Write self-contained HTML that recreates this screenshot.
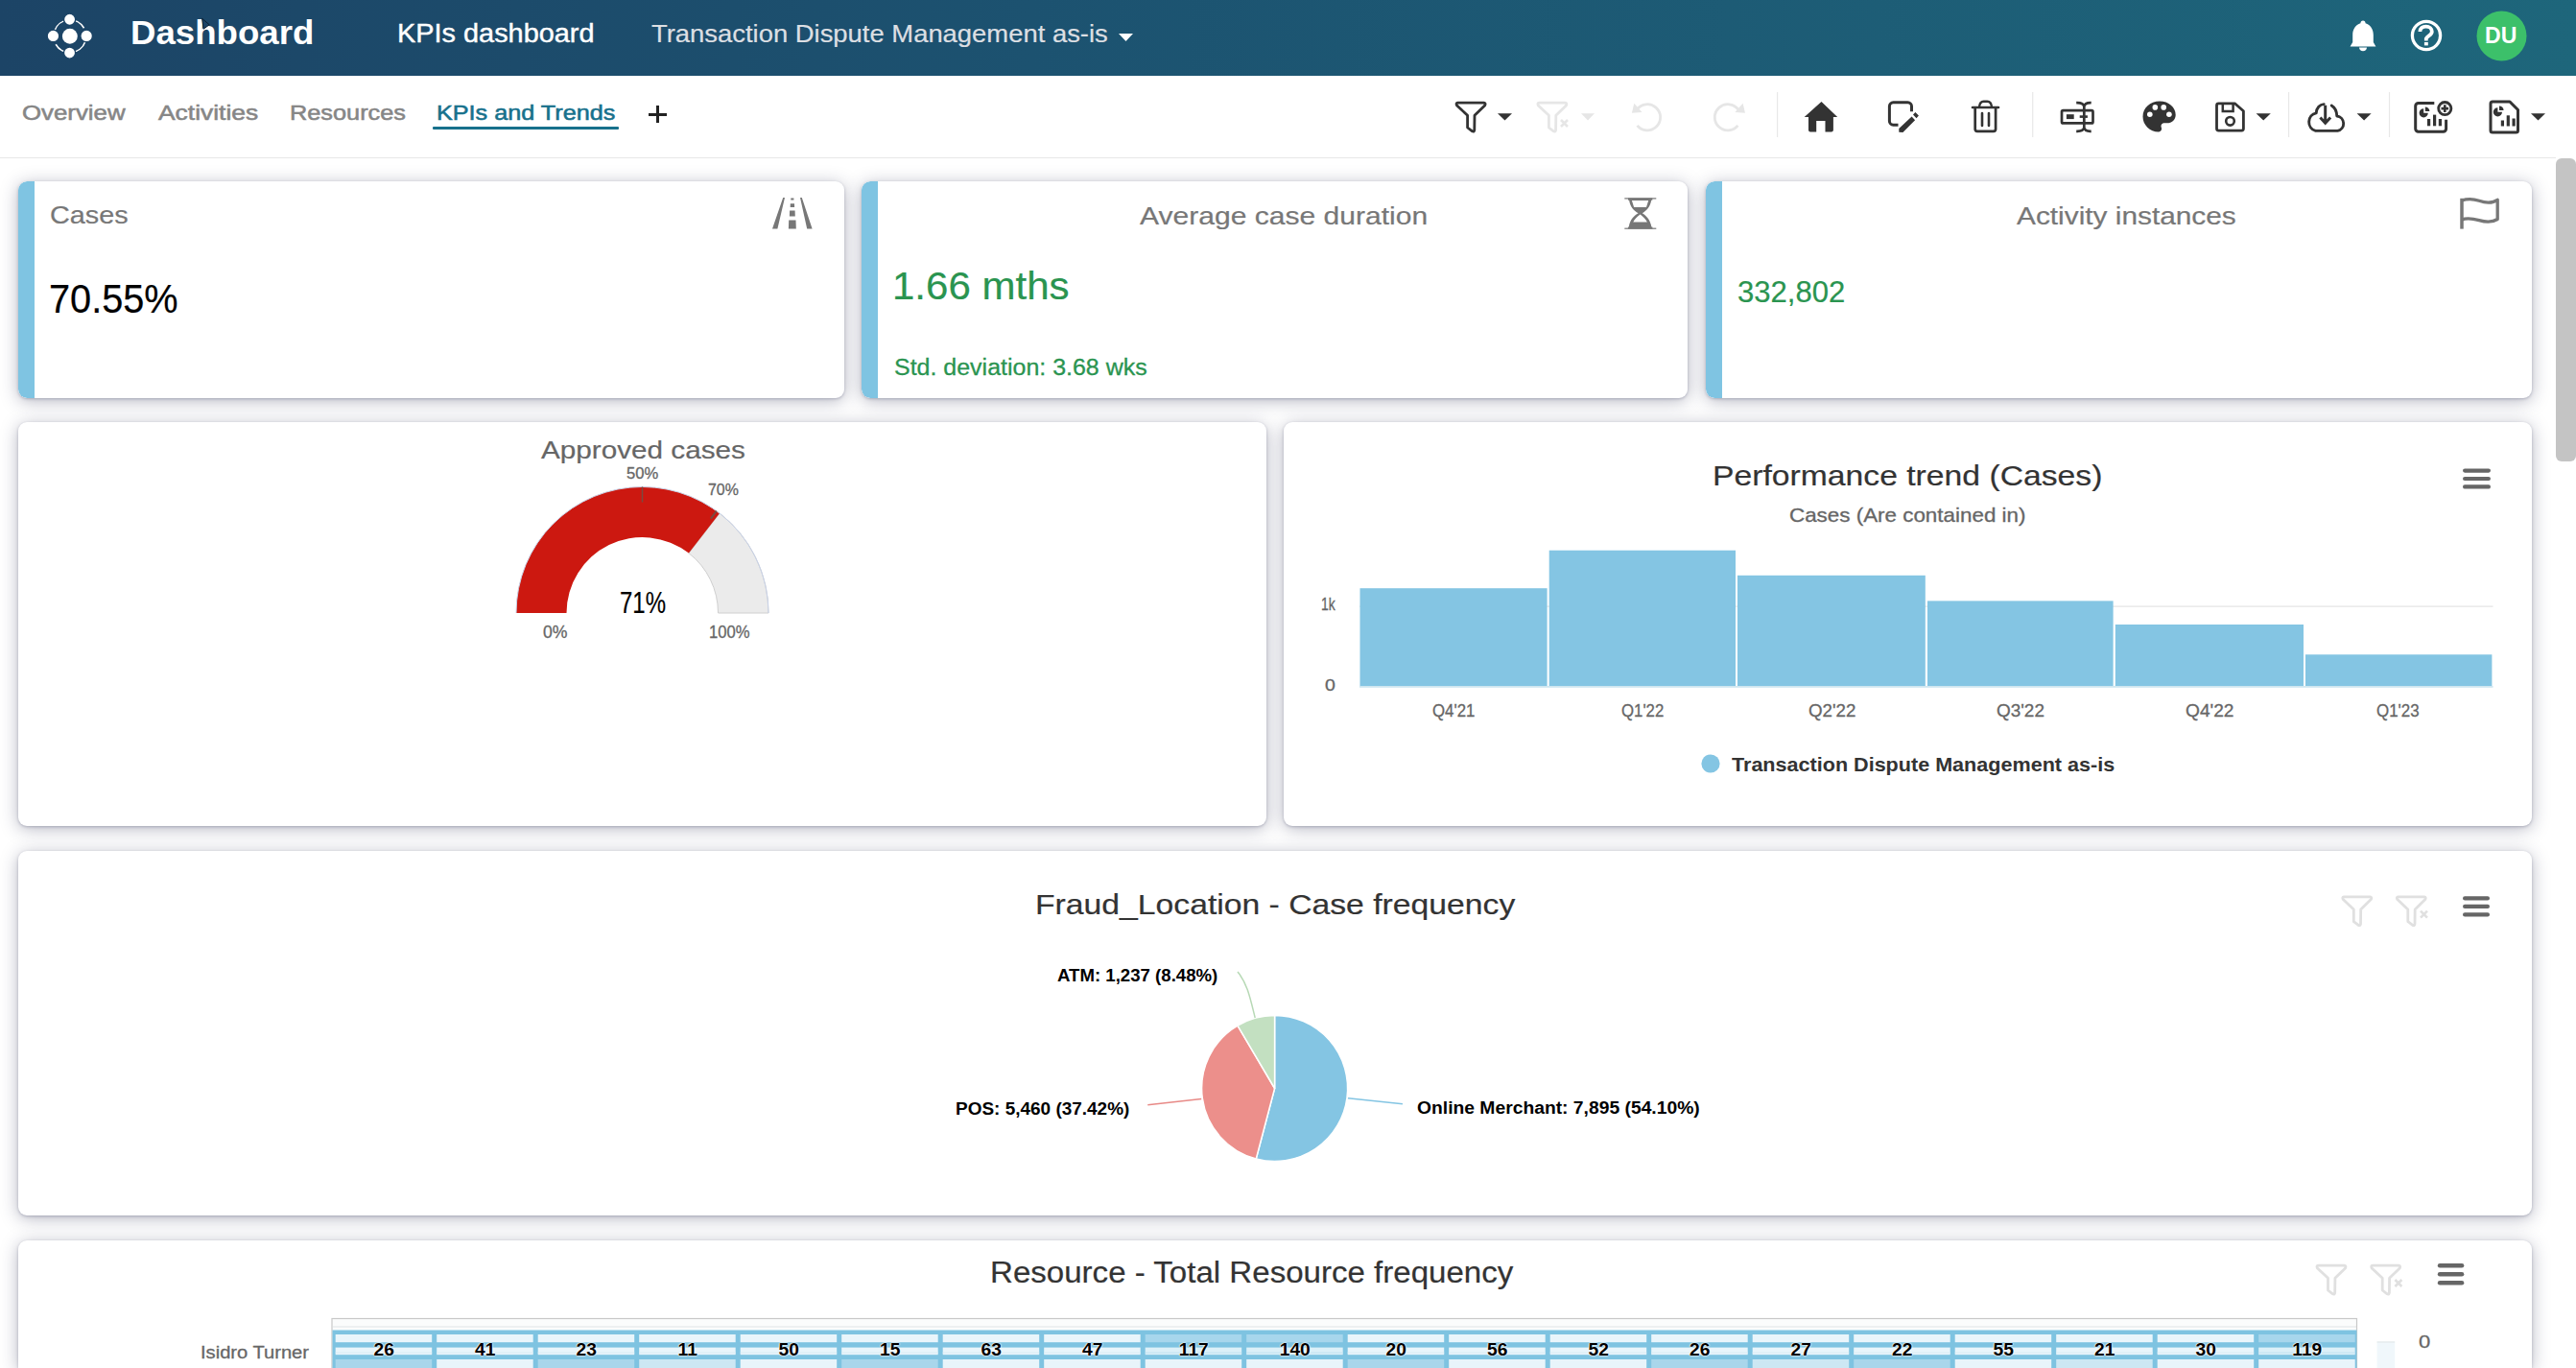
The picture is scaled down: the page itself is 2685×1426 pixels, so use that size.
<!DOCTYPE html><html><head><meta charset="utf-8"><style>
*{margin:0;padding:0;box-sizing:border-box}
html,body{width:2685px;height:1426px;overflow:hidden;background:#fff;font-family:"Liberation Sans",sans-serif}
.t{position:absolute;line-height:1;white-space:nowrap;transform-origin:0 0}
.a{position:absolute}
.card{position:absolute;background:#fff;border-radius:9px;box-shadow:0 1px 3px rgba(40,45,80,0.25),0 3px 18px rgba(40,45,80,0.34)}
.strip{position:absolute;left:0;top:0;bottom:0;width:17px;background:#7fc4e2;border-radius:9px 0 0 9px}
svg{position:absolute;overflow:visible}
</style></head><body>
<div class="a" style="left:0;top:0;width:2685px;height:79px;background:linear-gradient(90deg,#1c4466 0%,#1c5270 40%,#1e667b 100%)"></div>
<svg style="left:0;top:0" width="2685" height="80" viewBox="0 0 2685 80">
<path d="M56.88 31.94 A17 17 0 0 1 87.57 29.25 M88.82 43.56 A17 17 0 0 1 58.13 46.25" fill="none" stroke="#fff" stroke-width="1.6"/>
<circle cx="72.85" cy="37.75" r="7.95" fill="#fff"/>
<g fill="#fff" stroke="#1c4466" stroke-width="1.4">
<circle cx="72.6" cy="20.25" r="6.1"/><circle cx="72.55" cy="55.05" r="6.1"/>
<circle cx="55.45" cy="37.45" r="6.3"/><circle cx="90.15" cy="37.45" r="6.3"/></g>
<path d="M1166 35 L1181 35 L1173.5 43 Z" fill="#fff"/>
<!-- bell -->
<g fill="#fff">
<path d="M2463 21.5 c1.6 0 2.6 1.2 2.6 2.8 c5.2 1.6 8.2 6.4 8.2 12.2 v7.5 l2.6 4.6 h-26.8 l2.6-4.6 v-7.5 c0-5.8 3-10.6 8.2-12.2 c0-1.6 1-2.8 2.6-2.8z"/>
<path d="M2459 49.5 h8 c0 2.2-1.8 3.8-4 3.8 s-4-1.6-4-3.8z"/>
</g>
<!-- help -->
<circle cx="2529" cy="37" r="14.6" fill="none" stroke="#fff" stroke-width="3.3"/>
<path d="M2522.4 33 C2522.4 29.6 2525 27.7 2528.6 27.7 C2532.3 27.7 2534.8 29.8 2534.8 33 C2534.8 36.3 2530.6 37.3 2528.8 40.2 V42.4" fill="none" stroke="#fff" stroke-width="3.8"/>
<rect x="2526.9" y="44" width="3.9" height="3.4" fill="#fff"/>
<!-- avatar -->
<circle cx="2607.5" cy="37.4" r="26" fill="#3cc06a"/>
</svg>
<div class="a" style="left:0;top:164px;width:2664px;height:1px;background:#e8e8e8"></div>
<div class="a" style="left:451px;top:132px;width:194px;height:3px;background:#17718c;border-radius:1px"></div>
<div class="a" style="left:675.6px;top:117.6px;width:19.4px;height:3px;background:#222"></div>
<div class="a" style="left:683.8px;top:109.7px;width:3px;height:18.7px;background:#222"></div>
<svg style="left:0;top:0" width="2685" height="170" viewBox="0 0 2685 170"><path d="M1519.5 107.2 L1546.5 107.2 Q1549 107.5 1547.6 110 L1537 120.3 L1536.8 135.5 Q1536.5 137.8 1534.6 136.8 L1529.6 133 L1529.6 120.3 L1518.6 110 Q1517.2 107.5 1519.5 107.2 Z" fill="none" stroke="#333" stroke-width="2.8" stroke-linejoin="round"/><path d="M1561 118.2 L1576 118.2 L1568.5 125.6 Z" fill="#333"/><path d="M1604.3 107.2 L1631.3 107.2 Q1633.8 107.5 1632.4 110 L1621.8 120.3 L1621.6 135.5 Q1621.3 137.8 1619.4 136.8 L1614.4 133 L1614.4 120.3 L1603.4 110 Q1602 107.5 1604.3 107.2 Z" fill="none" stroke="#e6e6e6" stroke-width="2.8" stroke-linejoin="round"/><path d="M1627 125 l7 7 m0-7 l-7 7" stroke="#e6e6e6" stroke-width="2.6"/><path d="M1648 118.2 L1662 118.2 L1655.0 125.6 Z" fill="#e6e6e6"/><path d="M1706.14 114.12 A13.6 13.6 0 1 1 1706.49 130.93" fill="none" stroke="#e6e6e6" stroke-width="2.8"/><path d="M1703.3 107.8 L1700.9 117.8 L1711.5 117 Z" fill="#e6e6e6"/><path d="M1811.76 114.12 A13.6 13.6 0 1 0 1811.41 130.93" fill="none" stroke="#e6e6e6" stroke-width="2.8"/><path d="M1816.6 107.8 L1819 117.8 L1808.4 117 Z" fill="#e6e6e6"/><rect x="1852.0" y="96" width="1.2" height="47" fill="#e8e8e8"/><rect x="2118.1" y="96" width="1.2" height="47" fill="#e8e8e8"/><rect x="2385.0" y="96" width="1.2" height="47" fill="#e8e8e8"/><rect x="2489.9" y="96" width="1.2" height="47" fill="#e8e8e8"/><path d="M1898.5 106 L1915.2 122 h-4.3 v13.6 a2 2 0 0 1 -2 2 h-6.4 v-11.6 h-9.3 v11.6 h-6.2 a2 2 0 0 1 -2-2 v-13.6 h-4.3 z" fill="#333"/><path d="M1992.5 116.2 V110.8 a4 4 0 0 0 -4-4 H1973.4 a4 4 0 0 0 -4 4 V126.2 a4 4 0 0 0 4 4 H1978.5" fill="none" stroke="#333" stroke-width="3"/><path d="M1979.3 137.7 L1979.3 134.1 L1992.6 121.4 L1996.1 125.2 L1983.4 138 Z M1994 119.5 L1996.4 117 L1999.9 120.6 L1997.5 123.3 Z" fill="#333"/><path d="M2056 112 H2083" stroke="#333" stroke-width="2.6" stroke-linecap="round"/><path d="M2063 111.5 C2063.5 107 2065 105.8 2067.5 105.8 H2071.5 C2074 105.8 2075.5 107 2076 111.5" fill="none" stroke="#333" stroke-width="2.4"/><path d="M2058.7 113 V134.5 a2.3 2.3 0 0 0 2.3 2.3 H2077.8 a2.3 2.3 0 0 0 2.3-2.3 V113" fill="none" stroke="#333" stroke-width="2.7"/><path d="M2066 118 V131 M2073 118 V131" stroke="#333" stroke-width="2.6" stroke-linecap="round"/><rect x="2149" y="115.2" width="32.5" height="13.2" rx="1.5" fill="none" stroke="#333" stroke-width="2.7"/><rect x="2153.9" y="119.2" width="7.8" height="4.9" fill="#333"/><path d="M2167.7 121.6 H2175.9" stroke="#333" stroke-width="2.6"/><path d="M2172.3 110 V133.8 M2164.2 107.2 C2168 107 2171.5 107.5 2172.3 111 C2173 107.5 2176.5 107 2179.7 107.2 M2164.2 136.8 C2168 137 2171.5 136.5 2172.3 133 C2173 136.5 2176.5 137 2179.7 136.8" fill="none" stroke="#333" stroke-width="2.7"/><path d="M2251 105.5 c9.5 0 16.7 6.3 16.7 14.2 c0 5-4 8.6-9 8.6 h-3 c-2 0-3.2 1.6-3.2 3.2 c0 0.9 0.6 1.6 0.6 2.6 c0 1.6-1 3.3-3 3.3 c-9.5 0-16.6-7.4-16.6-16 c0-8.8 7.5-15.9 17.5-15.9z" fill="#333"/><circle cx="2240.8" cy="119.2" r="2.8" fill="#fff"/><circle cx="2246.3" cy="111.9" r="2.8" fill="#fff"/><circle cx="2255.2" cy="111.9" r="2.8" fill="#fff"/><circle cx="2260.9" cy="119.2" r="2.8" fill="#fff"/><path d="M2310.5 109.8 a2 2 0 0 1 2-2 h16.8 l9.1 7.9 v18.4 a2 2 0 0 1 -2 2 h-23.9 a2 2 0 0 1 -2-2z" fill="none" stroke="#333" stroke-width="2.8" stroke-linejoin="round"/><path d="M2316.8 108 v7.9 h10.8 v-7.9" fill="none" stroke="#333" stroke-width="2.5"/><circle cx="2324.5" cy="126.3" r="4.3" fill="none" stroke="#333" stroke-width="2.6"/><path d="M2351.6 118.2 L2366.8 118.2 L2359.2 125.6 Z" fill="#333"/><path d="M2414.2 117.8 A9.6 9.6 0 0 0 2413.6 136.4 H2436.4 A7.8 7.8 0 0 0 2435.8 121 M2414.2 117.8 C2414.6 112.5 2418 108.8 2422.2 108.6 M2430.2 110 C2433.5 112 2435.6 116 2435.8 121" fill="none" stroke="#333" stroke-width="2.9" stroke-linecap="round"/><path d="M2423.7 109.8 V128 M2418.4 122.5 L2423.7 128.2 L2429.1 122.5" fill="none" stroke="#333" stroke-width="3"/><path d="M2456.6 118.2 L2471.6 118.2 L2464.1 125.6 Z" fill="#333"/><path d="M2537.3 107.5 h-16.6 a3 3 0 0 0 -3 3 v23.8 a3 3 0 0 0 3 3 h25.9 a3 3 0 0 0 3-3 v-9.6" fill="none" stroke="#333" stroke-width="3"/><circle cx="2548.3" cy="113.1" r="6.6" fill="none" stroke="#333" stroke-width="2.8"/><path d="M2548.3 109.3 v7.6 M2544.5 113.1 h7.6" stroke="#333" stroke-width="2.6"/><path d="M2526.2 113.2 a4.6 4.6 0 1 0 4.6 4.6 h-4.6z" fill="#333"/><path d="M2527.8 111.5 a4.6 4.6 0 0 1 4.6 4.6 h-4.6z" fill="#333"/><rect x="2530" y="124" width="3.2" height="7.3" fill="#333"/><rect x="2536" y="119.6" width="3.2" height="11.7" fill="#333"/><rect x="2541.8" y="124" width="3.2" height="7.3" fill="#333"/><path d="M2596 108 a2 2 0 0 1 2-2 h18 l8.5 8.5 v21.5 a2 2 0 0 1 -2 2 h-24.5 a2 2 0 0 1 -2-2z" fill="none" stroke="#333" stroke-width="3" stroke-linejoin="round"/><path d="M2603.4 112.2 a4.6 4.6 0 1 0 4.6 4.6 h-4.6z" fill="#333"/><path d="M2605 110.5 a4.6 4.6 0 0 1 4.6 4.6 h-4.6z" fill="#333"/><rect x="2606.8" y="125.5" width="3.2" height="6" fill="#333"/><rect x="2612.7" y="120.3" width="3.2" height="11.2" fill="#333"/><rect x="2618.5" y="123.5" width="3.2" height="8" fill="#333"/><path d="M2638 118.2 L2653 118.2 L2645.5 125.6 Z" fill="#333"/></svg>
<div class="a" style="left:2664px;top:165px;width:21px;height:316px;background:#c4c4c4;border-radius:6px"></div>
<div class="card" style="left:19px;top:189px;width:861px;height:226px;overflow:hidden"><div class="strip"></div></div>
<div class="card" style="left:898px;top:189px;width:861px;height:226px;overflow:hidden"><div class="strip"></div></div>
<div class="card" style="left:1778px;top:189px;width:861px;height:226px;overflow:hidden"><div class="strip"></div></div>
<div class="card" style="left:19px;top:440px;width:1301px;height:421px;overflow:hidden"></div>
<div class="card" style="left:1338px;top:440px;width:1301px;height:421px;overflow:hidden"></div>
<div class="card" style="left:19px;top:887px;width:2620px;height:380px;overflow:hidden"></div>
<div class="card" style="left:19px;top:1293px;width:2620px;height:133px;border-radius:9px 9px 0 0"></div>
<svg style="left:0;top:0" width="2685" height="1426" viewBox="0 0 2685 1426"><path d="M816.2 206 h1.8 l-7.6 32.6 h-5.4z M834 206 h1.8 l10.8 32.6 h-5.4z" fill="#777"/><path d="M824.3 206.4 h3.1 v2.2 h-3.1z M823.8 212.3 h4.2 l0.1 3.6 h-4.4z M823.1 219.5 h5.5 l0.2 6 h-5.9z M822.2 229.6 h7.3 l0.3 9 h-7.9z" fill="#777"/><rect x="1693.3" y="206.3" width="33" height="1.2" fill="#777"/><rect x="1693.3" y="237.6" width="33" height="1.2" fill="#777"/><path fill-rule="evenodd" fill="#777" d="M1697 206.5 h25.3 v2.3 h-1.1 C1720 216 1716 219.5 1711.8 222.3 C1716 225 1720 229 1721.4 236.4 h1 v2.2 h-25.5 v-2.2 h0.9 C1699 229 1703 225 1707.6 222.3 C1703 219.5 1699.2 216 1698.1 208.8 h-1.1z M1700.9 208.9 h17.3 l-2.2 7 h-12.9z M1709.6 223.6 C1706 226 1703.5 229 1702.3 231.4 h14.6 C1715.6 229 1713 226 1709.6 223.6z"/><path d="M2566 238.6 V206.8" stroke="#777" stroke-width="3.5"/><path d="M2566 209 C2571 207.3 2578 207.3 2584 209.3 S2598 212 2603.2 208.3 V228.5 C2598 231.8 2590 231.3 2584 229.6 S2571 227 2566 228.9" fill="none" stroke="#777" stroke-width="3.3" stroke-linejoin="round"/><rect x="2567" y="488.50" width="29" height="4.20" rx="2.10" fill="#666"/><rect x="2567" y="496.90" width="29" height="4.20" rx="2.10" fill="#666"/><rect x="2567" y="505.30" width="29" height="4.20" rx="2.10" fill="#666"/><rect x="2567" y="934.30" width="28" height="4.26" rx="2.13" fill="#666"/><rect x="2567" y="942.82" width="28" height="4.26" rx="2.13" fill="#666"/><rect x="2567" y="951.34" width="28" height="4.26" rx="2.13" fill="#666"/><rect x="2540.8" y="1317.00" width="27.5" height="4.52" rx="2.26" fill="#666"/><rect x="2540.8" y="1326.04" width="27.5" height="4.52" rx="2.26" fill="#666"/><rect x="2540.8" y="1335.08" width="27.5" height="4.52" rx="2.26" fill="#666"/><g transform="translate(2440.5,932.6) scale(1.0)"><path d="M2.7 2.2 L29.7 2.2 Q32.2 2.5 30.8 5 L20.2 15.3 L20 30.5 Q19.7 32.8 17.8 31.8 L12.8 28 L12.8 15.3 L1.8 5 Q0.4 2.5 2.7 2.2 Z" fill="none" stroke="#e0e0e0" stroke-width="2.8" stroke-linejoin="round"/></g><g transform="translate(2497,932.6) scale(1.0)"><path d="M2.7 2.2 L29.7 2.2 Q32.2 2.5 30.8 5 L20.2 15.3 L20 30.5 Q19.7 32.8 17.8 31.8 L12.8 28 L12.8 15.3 L1.8 5 Q0.4 2.5 2.7 2.2 Z" fill="none" stroke="#e0e0e0" stroke-width="2.8" stroke-linejoin="round"/><path d="M26 17 l7 7 m0-7 l-7 7" stroke="#e0e0e0" stroke-width="2.6"/></g><g transform="translate(2413.7,1317) scale(1.0)"><path d="M2.7 2.2 L29.7 2.2 Q32.2 2.5 30.8 5 L20.2 15.3 L20 30.5 Q19.7 32.8 17.8 31.8 L12.8 28 L12.8 15.3 L1.8 5 Q0.4 2.5 2.7 2.2 Z" fill="none" stroke="#e0e0e0" stroke-width="2.8" stroke-linejoin="round"/></g><g transform="translate(2470.4,1317) scale(1.0)"><path d="M2.7 2.2 L29.7 2.2 Q32.2 2.5 30.8 5 L20.2 15.3 L20 30.5 Q19.7 32.8 17.8 31.8 L12.8 28 L12.8 15.3 L1.8 5 Q0.4 2.5 2.7 2.2 Z" fill="none" stroke="#e0e0e0" stroke-width="2.8" stroke-linejoin="round"/><path d="M26 17 l7 7 m0-7 l-7 7" stroke="#e0e0e0" stroke-width="2.6"/></g></svg>
<svg style="left:0;top:0" width="2685" height="1426" viewBox="0 0 2685 1426"><path d="M750.10 535.09 A131.5 131.5 0 0 1 801.00 639.00 L748.50 639.00 A79 79 0 0 0 717.92 576.58z" fill="#ebebeb" stroke="#cfcfcf" stroke-width="1"/><path d="M538.00 639.00 A131.5 131.5 0 0 1 750.10 535.09 L717.92 576.58 A79 79 0 0 0 590.50 639.00z" fill="#cc1810"/><path d="M538.00 639.00 A131.5 131.5 0 0 1 801.00 639.00" fill="none" stroke="#c9d3e8" stroke-width="1"/><path d="M669.50 507.50 L669.50 523.50" stroke="#7a4a40" stroke-width="1.5"/><path d="M746.79 532.61 L740.92 540.70" stroke="#7a4a40" stroke-width="2"/></svg>
<svg style="left:0;top:0" width="2685" height="1426" viewBox="0 0 2685 1426"><rect x="1417" y="631.5" width="1181.5" height="1.3" fill="#e6e6e6"/><rect x="1417.5" y="613.2" width="195.10" height="101.80" fill="#84c5e3"/><rect x="1614.7" y="573.7" width="194.30" height="141.30" fill="#84c5e3"/><rect x="1811" y="599.8" width="195.80" height="115.20" fill="#84c5e3"/><rect x="2009" y="626.4" width="193.60" height="88.60" fill="#84c5e3"/><rect x="2204.8" y="651" width="196.20" height="64.00" fill="#84c5e3"/><rect x="2403" y="682.3" width="194.40" height="32.70" fill="#84c5e3"/><rect x="1417" y="715" width="1181.5" height="1.8" fill="#cfe6f0"/><circle cx="1783" cy="796" r="9.6" fill="#84c5e3"/></svg>
<svg style="left:0;top:0" width="2685" height="1426" viewBox="0 0 2685 1426"><path d="M1328.6 1134.5 L1328.60 1058.50 A76 76 0 1 1 1309.24 1207.99z" fill="#84c5e3" stroke="#fff" stroke-width="1.5" stroke-linejoin="round"/><path d="M1328.6 1134.5 L1309.24 1207.99 A76 76 0 0 1 1290.00 1069.04z" fill="#ec8f8b" stroke="#fff" stroke-width="1.5" stroke-linejoin="round"/><path d="M1328.6 1134.5 L1290.00 1069.04 A76 76 0 0 1 1328.60 1058.50z" fill="#c3e0c1" stroke="#fff" stroke-width="1.5" stroke-linejoin="round"/><path d="M1308.2 1061 C1303 1040 1300 1025 1290 1013" fill="none" stroke="#b7d9b5" stroke-width="1.5"/><path d="M1252.2 1145.5 L1196.3 1151.8" fill="none" stroke="#e88a87" stroke-width="1.5"/><path d="M1405 1144.8 L1461.9 1150.8" fill="none" stroke="#84c5e3" stroke-width="1.5"/></svg>
<svg style="left:0;top:0" width="2685" height="1426" viewBox="0 0 2685 1426"><rect x="346" y="1374.5" width="2110.5" height="60" fill="#fbfcfc" stroke="#c8c8c8" stroke-width="1.2"/><rect x="347" y="1382.5" width="2109" height="1" fill="#e0e4e6"/><rect x="346.5" y="1386.5" width="2110" height="50" fill="#7ec3e1"/><rect x="349.70" y="1391" width="100.50" height="8.2" fill="#e9f5fb"/><rect x="349.70" y="1404.6" width="100.50" height="7.6" fill="#e9f5fb"/><rect x="349.70" y="1409.5" width="100.50" height="1.2" fill="#dcedf5"/><rect x="349.70" y="1417" width="100.50" height="20" fill="#a9d6eb"/><rect x="455.20" y="1391" width="100.50" height="8.2" fill="#e9f5fb"/><rect x="455.20" y="1404.6" width="100.50" height="7.6" fill="#e9f5fb"/><rect x="455.20" y="1409.5" width="100.50" height="1.2" fill="#dcedf5"/><rect x="455.20" y="1417" width="100.50" height="20" fill="#e8f4fa"/><rect x="560.70" y="1391" width="100.50" height="8.2" fill="#e9f5fb"/><rect x="560.70" y="1404.6" width="100.50" height="7.6" fill="#e9f5fb"/><rect x="560.70" y="1409.5" width="100.50" height="1.2" fill="#dcedf5"/><rect x="560.70" y="1417" width="100.50" height="20" fill="#a9d6eb"/><rect x="666.20" y="1391" width="100.50" height="8.2" fill="#e9f5fb"/><rect x="666.20" y="1404.6" width="100.50" height="7.6" fill="#e9f5fb"/><rect x="666.20" y="1409.5" width="100.50" height="1.2" fill="#dcedf5"/><rect x="666.20" y="1417" width="100.50" height="20" fill="#cce7f3"/><rect x="771.70" y="1391" width="100.50" height="8.2" fill="#e9f5fb"/><rect x="771.70" y="1404.6" width="100.50" height="7.6" fill="#e9f5fb"/><rect x="771.70" y="1409.5" width="100.50" height="1.2" fill="#dcedf5"/><rect x="771.70" y="1417" width="100.50" height="20" fill="#e8f4fa"/><rect x="877.20" y="1391" width="100.50" height="8.2" fill="#e9f5fb"/><rect x="877.20" y="1404.6" width="100.50" height="7.6" fill="#e9f5fb"/><rect x="877.20" y="1409.5" width="100.50" height="1.2" fill="#dcedf5"/><rect x="877.20" y="1417" width="100.50" height="20" fill="#a9d6eb"/><rect x="982.70" y="1391" width="100.50" height="8.2" fill="#e9f5fb"/><rect x="982.70" y="1404.6" width="100.50" height="7.6" fill="#e9f5fb"/><rect x="982.70" y="1409.5" width="100.50" height="1.2" fill="#dcedf5"/><rect x="982.70" y="1417" width="100.50" height="20" fill="#e8f4fa"/><rect x="1088.20" y="1391" width="100.50" height="8.2" fill="#e9f5fb"/><rect x="1088.20" y="1404.6" width="100.50" height="7.6" fill="#e9f5fb"/><rect x="1088.20" y="1409.5" width="100.50" height="1.2" fill="#dcedf5"/><rect x="1088.20" y="1417" width="100.50" height="20" fill="#e8f4fa"/><rect x="1193.70" y="1391" width="100.50" height="8.2" fill="#a7d6ec"/><rect x="1193.70" y="1404.6" width="100.50" height="7.6" fill="#dcf0f8"/><rect x="1193.70" y="1409.5" width="100.50" height="1.2" fill="#c4e3f1"/><rect x="1193.70" y="1417" width="100.50" height="20" fill="#e8f4fa"/><rect x="1299.20" y="1391" width="100.50" height="8.2" fill="#a7d6ec"/><rect x="1299.20" y="1404.6" width="100.50" height="7.6" fill="#dcf0f8"/><rect x="1299.20" y="1409.5" width="100.50" height="1.2" fill="#c4e3f1"/><rect x="1299.20" y="1417" width="100.50" height="20" fill="#e8f4fa"/><rect x="1404.70" y="1391" width="100.50" height="8.2" fill="#e9f5fb"/><rect x="1404.70" y="1404.6" width="100.50" height="7.6" fill="#e9f5fb"/><rect x="1404.70" y="1409.5" width="100.50" height="1.2" fill="#dcedf5"/><rect x="1404.70" y="1417" width="100.50" height="20" fill="#a9d6eb"/><rect x="1510.20" y="1391" width="100.50" height="8.2" fill="#e9f5fb"/><rect x="1510.20" y="1404.6" width="100.50" height="7.6" fill="#e9f5fb"/><rect x="1510.20" y="1409.5" width="100.50" height="1.2" fill="#dcedf5"/><rect x="1510.20" y="1417" width="100.50" height="20" fill="#e8f4fa"/><rect x="1615.70" y="1391" width="100.50" height="8.2" fill="#e9f5fb"/><rect x="1615.70" y="1404.6" width="100.50" height="7.6" fill="#e9f5fb"/><rect x="1615.70" y="1409.5" width="100.50" height="1.2" fill="#dcedf5"/><rect x="1615.70" y="1417" width="100.50" height="20" fill="#e8f4fa"/><rect x="1721.20" y="1391" width="100.50" height="8.2" fill="#e9f5fb"/><rect x="1721.20" y="1404.6" width="100.50" height="7.6" fill="#e9f5fb"/><rect x="1721.20" y="1409.5" width="100.50" height="1.2" fill="#dcedf5"/><rect x="1721.20" y="1417" width="100.50" height="20" fill="#a9d6eb"/><rect x="1826.70" y="1391" width="100.50" height="8.2" fill="#e9f5fb"/><rect x="1826.70" y="1404.6" width="100.50" height="7.6" fill="#e9f5fb"/><rect x="1826.70" y="1409.5" width="100.50" height="1.2" fill="#dcedf5"/><rect x="1826.70" y="1417" width="100.50" height="20" fill="#cce7f3"/><rect x="1932.20" y="1391" width="100.50" height="8.2" fill="#e9f5fb"/><rect x="1932.20" y="1404.6" width="100.50" height="7.6" fill="#e9f5fb"/><rect x="1932.20" y="1409.5" width="100.50" height="1.2" fill="#dcedf5"/><rect x="1932.20" y="1417" width="100.50" height="20" fill="#a9d6eb"/><rect x="2037.70" y="1391" width="100.50" height="8.2" fill="#e9f5fb"/><rect x="2037.70" y="1404.6" width="100.50" height="7.6" fill="#e9f5fb"/><rect x="2037.70" y="1409.5" width="100.50" height="1.2" fill="#dcedf5"/><rect x="2037.70" y="1417" width="100.50" height="20" fill="#e8f4fa"/><rect x="2143.20" y="1391" width="100.50" height="8.2" fill="#e9f5fb"/><rect x="2143.20" y="1404.6" width="100.50" height="7.6" fill="#e9f5fb"/><rect x="2143.20" y="1409.5" width="100.50" height="1.2" fill="#dcedf5"/><rect x="2143.20" y="1417" width="100.50" height="20" fill="#cce7f3"/><rect x="2248.70" y="1391" width="100.50" height="8.2" fill="#e9f5fb"/><rect x="2248.70" y="1404.6" width="100.50" height="7.6" fill="#e9f5fb"/><rect x="2248.70" y="1409.5" width="100.50" height="1.2" fill="#dcedf5"/><rect x="2248.70" y="1417" width="100.50" height="20" fill="#e8f4fa"/><rect x="2354.20" y="1391" width="100.50" height="8.2" fill="#a7d6ec"/><rect x="2354.20" y="1404.6" width="100.50" height="7.6" fill="#dcf0f8"/><rect x="2354.20" y="1409.5" width="100.50" height="1.2" fill="#c4e3f1"/><rect x="2354.20" y="1417" width="100.50" height="20" fill="#e8f4fa"/><rect x="2477.6" y="1398.4" width="18.6" height="40" fill="#f0f7fb"/><rect x="2477.6" y="1398.4" width="18.6" height="1.2" fill="#e3e8ea"/></svg>
<div class="t" style="left:350.25px;width:100px;text-align:center;top:1397.08px;font-size:19.2px;font-weight:700;color:#000;text-shadow:0 0 2px #fff,0 0 2px #fff,0 0 1px #fff">26</div>
<div class="t" style="left:455.75px;width:100px;text-align:center;top:1397.08px;font-size:19.2px;font-weight:700;color:#000;text-shadow:0 0 2px #fff,0 0 2px #fff,0 0 1px #fff">41</div>
<div class="t" style="left:561.25px;width:100px;text-align:center;top:1397.08px;font-size:19.2px;font-weight:700;color:#000;text-shadow:0 0 2px #fff,0 0 2px #fff,0 0 1px #fff">23</div>
<div class="t" style="left:666.75px;width:100px;text-align:center;top:1397.08px;font-size:19.2px;font-weight:700;color:#000;text-shadow:0 0 2px #fff,0 0 2px #fff,0 0 1px #fff">11</div>
<div class="t" style="left:772.25px;width:100px;text-align:center;top:1397.08px;font-size:19.2px;font-weight:700;color:#000;text-shadow:0 0 2px #fff,0 0 2px #fff,0 0 1px #fff">50</div>
<div class="t" style="left:877.75px;width:100px;text-align:center;top:1397.08px;font-size:19.2px;font-weight:700;color:#000;text-shadow:0 0 2px #fff,0 0 2px #fff,0 0 1px #fff">15</div>
<div class="t" style="left:983.25px;width:100px;text-align:center;top:1397.08px;font-size:19.2px;font-weight:700;color:#000;text-shadow:0 0 2px #fff,0 0 2px #fff,0 0 1px #fff">63</div>
<div class="t" style="left:1088.75px;width:100px;text-align:center;top:1397.08px;font-size:19.2px;font-weight:700;color:#000;text-shadow:0 0 2px #fff,0 0 2px #fff,0 0 1px #fff">47</div>
<div class="t" style="left:1194.25px;width:100px;text-align:center;top:1397.08px;font-size:19.2px;font-weight:700;color:#000;text-shadow:0 0 2px #fff,0 0 2px #fff,0 0 1px #fff">117</div>
<div class="t" style="left:1299.75px;width:100px;text-align:center;top:1397.08px;font-size:19.2px;font-weight:700;color:#000;text-shadow:0 0 2px #fff,0 0 2px #fff,0 0 1px #fff">140</div>
<div class="t" style="left:1405.25px;width:100px;text-align:center;top:1397.08px;font-size:19.2px;font-weight:700;color:#000;text-shadow:0 0 2px #fff,0 0 2px #fff,0 0 1px #fff">20</div>
<div class="t" style="left:1510.75px;width:100px;text-align:center;top:1397.08px;font-size:19.2px;font-weight:700;color:#000;text-shadow:0 0 2px #fff,0 0 2px #fff,0 0 1px #fff">56</div>
<div class="t" style="left:1616.25px;width:100px;text-align:center;top:1397.08px;font-size:19.2px;font-weight:700;color:#000;text-shadow:0 0 2px #fff,0 0 2px #fff,0 0 1px #fff">52</div>
<div class="t" style="left:1721.75px;width:100px;text-align:center;top:1397.08px;font-size:19.2px;font-weight:700;color:#000;text-shadow:0 0 2px #fff,0 0 2px #fff,0 0 1px #fff">26</div>
<div class="t" style="left:1827.25px;width:100px;text-align:center;top:1397.08px;font-size:19.2px;font-weight:700;color:#000;text-shadow:0 0 2px #fff,0 0 2px #fff,0 0 1px #fff">27</div>
<div class="t" style="left:1932.75px;width:100px;text-align:center;top:1397.08px;font-size:19.2px;font-weight:700;color:#000;text-shadow:0 0 2px #fff,0 0 2px #fff,0 0 1px #fff">22</div>
<div class="t" style="left:2038.25px;width:100px;text-align:center;top:1397.08px;font-size:19.2px;font-weight:700;color:#000;text-shadow:0 0 2px #fff,0 0 2px #fff,0 0 1px #fff">55</div>
<div class="t" style="left:2143.75px;width:100px;text-align:center;top:1397.08px;font-size:19.2px;font-weight:700;color:#000;text-shadow:0 0 2px #fff,0 0 2px #fff,0 0 1px #fff">21</div>
<div class="t" style="left:2249.25px;width:100px;text-align:center;top:1397.08px;font-size:19.2px;font-weight:700;color:#000;text-shadow:0 0 2px #fff,0 0 2px #fff,0 0 1px #fff">30</div>
<div class="t" style="left:2354.75px;width:100px;text-align:center;top:1397.08px;font-size:19.2px;font-weight:700;color:#000;text-shadow:0 0 2px #fff,0 0 2px #fff,0 0 1px #fff">119</div>
<div class="t" style="left:135.70px;top:17.45px;font-size:34.87px;font-weight:700;color:#ffffff;transform:scaleX(1.0511);">Dashboard</div>
<div class="t" style="left:414.39px;top:20.97px;font-size:27.39px;font-weight:400;color:#ffffff;transform:scaleX(1.0550);-webkit-text-stroke:0.4px #fff">KPIs dashboard</div>
<div class="t" style="left:679.30px;top:22.98px;font-size:25.29px;font-weight:400;color:#dcdfe3;transform:scaleX(1.0840);-webkit-text-stroke:0.2px #dcdfe3">Transaction Dispute Management as-is</div>
<div class="t" style="left:2590.12px;top:25.06px;font-size:24.64px;font-weight:700;color:#ffffff;transform:scaleX(0.9375);">DU</div>
<div class="t" style="left:22.84px;top:107.43px;font-size:22.32px;font-weight:400;color:#868686;transform:scaleX(1.1565);-webkit-text-stroke:0.55px #868686">Overview</div>
<div class="t" style="left:165.00px;top:107.43px;font-size:22.32px;font-weight:400;color:#868686;transform:scaleX(1.1839);-webkit-text-stroke:0.55px #868686">Activities</div>
<div class="t" style="left:301.73px;top:107.43px;font-size:22.32px;font-weight:400;color:#868686;transform:scaleX(1.1346);-webkit-text-stroke:0.55px #868686">Resources</div>
<div class="t" style="left:454.74px;top:107.43px;font-size:22.32px;font-weight:400;color:#17718c;transform:scaleX(1.1296);-webkit-text-stroke:0.55px #17718c">KPIs and Trends</div>
<div class="t" style="left:51.89px;top:212.40px;font-size:25.94px;font-weight:400;color:#777777;transform:scaleX(1.1097);-webkit-text-stroke:0.2px #777777">Cases</div>
<div class="t" style="left:51.30px;top:291.05px;font-size:41.88px;font-weight:400;color:#000000;transform:scaleX(0.9482);-webkit-text-stroke:0.2px #000000">70.55%</div>
<div class="t" style="left:1187.50px;top:211.63px;font-size:26.09px;font-weight:400;color:#777777;transform:scaleX(1.1525);-webkit-text-stroke:0.2px #777777">Average case duration</div>
<div class="t" style="left:929.55px;top:278.24px;font-size:41.30px;font-weight:400;color:#2a9450;transform:scaleX(1.0175);-webkit-text-stroke:0.2px #2a9450">1.66 mths</div>
<div class="t" style="left:931.58px;top:371.43px;font-size:24.49px;font-weight:400;color:#2a9450;transform:scaleX(1.0195);-webkit-text-stroke:0.3px #2a9450">Std. deviation: 3.68 wks</div>
<div class="t" style="left:2102.30px;top:213.12px;font-size:25.51px;font-weight:400;color:#777777;transform:scaleX(1.1697);-webkit-text-stroke:0.2px #777777">Activity instances</div>
<div class="t" style="left:1811.09px;top:290.31px;font-size:30.87px;font-weight:400;color:#2a9450;transform:scaleX(1.0055);-webkit-text-stroke:0.2px #2a9450">332,802</div>
<div class="t" style="left:563.50px;top:455.71px;font-size:26.52px;font-weight:400;color:#666666;transform:scaleX(1.1196);-webkit-text-stroke:0.2px #666666">Approved cases</div>
<div class="t" style="left:652.68px;top:485.00px;font-size:16.23px;font-weight:400;color:#666666;transform:scaleX(1.0226);-webkit-text-stroke:0.3px #666666">50%</div>
<div class="t" style="left:738.05px;top:503.11px;font-size:16.81px;font-weight:400;color:#666666;transform:scaleX(0.9469);-webkit-text-stroke:0.3px #666666">70%</div>
<div class="t" style="left:565.91px;top:651.20px;font-size:17.83px;font-weight:400;color:#666666;transform:scaleX(0.9875);-webkit-text-stroke:0.3px #666666">0%</div>
<div class="t" style="left:738.87px;top:651.20px;font-size:17.83px;font-weight:400;color:#666666;transform:scaleX(0.9318);-webkit-text-stroke:0.3px #666666">100%</div>
<div class="t" style="left:645.67px;top:613.39px;font-size:31.30px;font-weight:400;color:#000000;transform:scaleX(0.7667);-webkit-text-stroke:0.2px #000000">71%</div>
<div class="t" style="left:1785.47px;top:481.20px;font-size:30.29px;font-weight:400;color:#333333;transform:scaleX(1.1127);-webkit-text-stroke:0.2px #333333">Performance trend (Cases)</div>
<div class="t" style="left:1865.10px;top:527.15px;font-size:20.29px;font-weight:400;color:#666666;transform:scaleX(1.1041);-webkit-text-stroke:0.3px #666666">Cases (Are contained in)</div>
<div class="t" style="left:1377.17px;top:620.04px;font-size:19.13px;font-weight:400;color:#666666;transform:scaleX(0.7316);-webkit-text-stroke:0.3px #666666">1k</div>
<div class="t" style="left:1380.54px;top:707.11px;font-size:16.81px;font-weight:400;color:#666666;transform:scaleX(1.1625);-webkit-text-stroke:0.3px #666666">0</div>
<div class="t" style="left:1492.96px;top:733.42px;font-size:17.97px;font-weight:400;color:#666666;transform:scaleX(0.9370);-webkit-text-stroke:0.3px #666666">Q4'21</div>
<div class="t" style="left:1690.07px;top:733.42px;font-size:17.97px;font-weight:400;color:#666666;transform:scaleX(0.9348);-webkit-text-stroke:0.3px #666666">Q1'22</div>
<div class="t" style="left:1884.66px;top:733.42px;font-size:17.97px;font-weight:400;color:#666666;transform:scaleX(1.0435);-webkit-text-stroke:0.3px #666666">Q2'22</div>
<div class="t" style="left:2081.45px;top:733.42px;font-size:17.97px;font-weight:400;color:#666666;transform:scaleX(1.0543);-webkit-text-stroke:0.3px #666666">Q3'22</div>
<div class="t" style="left:2277.93px;top:733.42px;font-size:17.97px;font-weight:400;color:#666666;transform:scaleX(1.0652);-webkit-text-stroke:0.3px #666666">Q4'22</div>
<div class="t" style="left:2477.46px;top:733.42px;font-size:17.97px;font-weight:400;color:#666666;transform:scaleX(0.9413);-webkit-text-stroke:0.3px #666666">Q1'23</div>
<div class="t" style="left:1805.40px;top:788.05px;font-size:19.71px;font-weight:700;color:#333333;transform:scaleX(1.0956);">Transaction Dispute Management as-is</div>
<div class="t" style="left:1079.24px;top:927.52px;font-size:29.86px;font-weight:400;color:#333333;transform:scaleX(1.1288);-webkit-text-stroke:0.2px #333333">Fraud_Location - Case frequency</div>
<div class="t" style="left:1101.68px;top:1008.08px;font-size:18.26px;font-weight:700;color:#000000;transform:scaleX(1.0204);">ATM: 1,237 (8.48%)</div>
<div class="t" style="left:996.16px;top:1147.08px;font-size:18.26px;font-weight:700;color:#000000;transform:scaleX(1.0393);">POS: 5,460 (37.42%)</div>
<div class="t" style="left:1477.24px;top:1146.08px;font-size:18.26px;font-weight:700;color:#000000;transform:scaleX(1.0567);">Online Merchant: 7,895 (54.10%)</div>
<div class="t" style="left:1031.73px;top:1310.83px;font-size:30.43px;font-weight:400;color:#333333;transform:scaleX(1.0870);-webkit-text-stroke:0.2px #333333">Resource - Total Resource frequency</div>
<div class="t" style="left:208.78px;top:1399.81px;font-size:18.99px;font-weight:400;color:#666666;transform:scaleX(1.0606);-webkit-text-stroke:0.3px #666666">Isidro Turner</div>
<div class="t" style="left:2520.62px;top:1389.76px;font-size:18.70px;font-weight:400;color:#666666;transform:scaleX(1.1778);-webkit-text-stroke:0.3px #666666">0</div>
<svg style="left:0;top:0" width="300" height="80" viewBox="0 0 300 80"><path d="M210.6 19.2 L218.2 25.8 L212.2 30.2 Z" fill="#1b4466" stroke="#0d2233" stroke-width="1" stroke-linejoin="round"/></svg>
</body></html>
